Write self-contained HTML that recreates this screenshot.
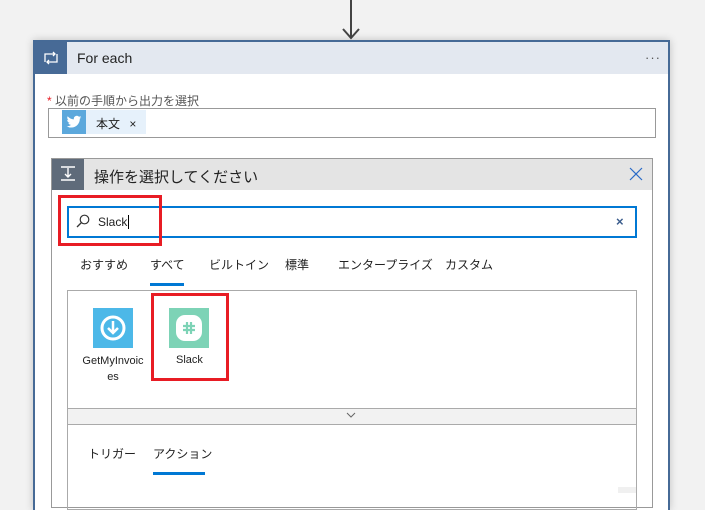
<!DOCTYPE html>
<html><head><meta charset="utf-8"><style>
*{margin:0;padding:0;box-sizing:border-box}
html,body{width:705px;height:493px}
body{background:#f2f2f2;position:relative;overflow:hidden;font-family:"Liberation Sans","Noto Sans CJK JP",sans-serif;color:#222}
.a{position:absolute}
.t{font-size:13px;white-space:nowrap}
.tab{font-size:12px;top:256px}
</style></head><body>
<div class="a" style="left:350px;top:0;width:2px;height:38px;background:#444"></div>
<svg class="a" style="left:342px;top:28px" width="18" height="12"><path d="M1 1 L9 10 L17 1" stroke="#444" stroke-width="2" fill="none"/></svg>
<div class="a" style="left:33px;top:40px;width:637px;height:470px;background:#fff;border:2px solid #466a96;border-bottom:none;box-shadow:0 0 8px rgba(0,0,0,.2)"></div>
<div class="a" style="left:35px;top:42px;width:633px;height:32px;background:#e3e8f0"></div>
<div class="a" style="left:35px;top:42px;width:32px;height:32px;background:#476a96"></div>
<svg class="a" style="left:43px;top:50px" width="16" height="16"><path d="M2 12V4h10M10 2l2 2-2 2M14 4v8H4M6 14l-2-2 2-2" stroke="#fff" stroke-width="1.3" fill="none"/></svg>
<div class="a t" style="left:77px;top:50px;font-size:14px">For each</div>
<div class="a t" style="left:645px;top:50px;color:#555;letter-spacing:1px">···</div>
<div class="a t" style="left:47px;top:92px;font-size:12px;color:#555"><span style="color:#e81c24">*</span> 以前の手順から出力を選択</div>
<div class="a" style="left:48px;top:108px;width:608px;height:30px;border:1px solid #999"></div>
<div class="a" style="left:62px;top:110px;width:84px;height:24px;background:#e6f1fb"></div>
<div class="a" style="left:62px;top:110px;width:24px;height:24px;background:#5ca8dc"></div>
<svg class="a" style="left:66px;top:114px" width="16" height="16" viewBox="0 0 24 24"><path fill="#fff" d="M23 5a9 9 0 0 1-2.6.7A4.5 4.5 0 0 0 22.4 3a9 9 0 0 1-2.9 1.1A4.5 4.5 0 0 0 11.8 8 12.8 12.8 0 0 1 2.5 3.3a4.5 4.5 0 0 0 1.4 6 4.5 4.5 0 0 1-2-.6 4.5 4.5 0 0 0 3.6 4.5 4.5 4.5 0 0 1-2 .1 4.5 4.5 0 0 0 4.2 3.1A9 9 0 0 1 1 18.3 12.8 12.8 0 0 0 7.9 20.3c8.3 0 12.8-6.9 12.8-12.8v-.6A9 9 0 0 0 23 5z"/></svg>
<div class="a t" style="left:96px;top:115px;font-size:12px">本文 <span style="margin-left:6px">×</span></div>
<div class="a" style="left:51px;top:158px;width:602px;height:350px;border:1px solid #999;background:#fff"></div>
<div class="a" style="left:52px;top:159px;width:600px;height:31px;background:#e4e4e4"></div>
<div class="a" style="left:52px;top:159px;width:32px;height:31px;background:#5f6b7a"></div>
<svg class="a" style="left:59px;top:165px" width="18" height="18"><path d="M2 2h14M9 3v9M6 9l3 3 3-3M2 15h14" stroke="#fff" stroke-width="1.4" fill="none"/></svg>
<div class="a t" style="left:94px;top:166px;font-size:15px">操作を選択してください</div>
<svg class="a" style="left:629px;top:167px" width="14" height="14"><path d="M1 1L13 13M13 1L1 13" stroke="#2a6bc8" stroke-width="1.2"/></svg>
<div class="a" style="left:67px;top:206px;width:570px;height:32px;border:2px solid #0078d4"></div>
<svg class="a" style="left:76px;top:214px" width="14" height="14"><circle cx="8.5" cy="5.5" r="4.3" stroke="#333" stroke-width="1.2" fill="none"/><path d="M5.5 8.5L1 13" stroke="#333" stroke-width="1.3"/></svg>
<div class="a t" style="left:98px;top:215px;font-size:12px">Slack<span style="border-left:1px solid #000;margin-left:1px"></span></div>
<div class="a t" style="left:616px;top:214px;font-size:13px;color:#3a5c8c;font-weight:bold">×</div>
<div class="a" style="left:58px;top:195px;width:104px;height:51px;border:3px solid #e81c24"></div>
<div class="a t tab" style="left:80px">おすすめ</div>
<div class="a t tab" style="left:150px">すべて</div>
<div class="a" style="left:150px;top:283px;width:34px;height:3px;background:#0078d4"></div>
<div class="a t tab" style="left:209px">ビルトイン</div>
<div class="a t tab" style="left:285px">標準</div>
<div class="a t tab" style="left:338px">エンタープライズ</div>
<div class="a t tab" style="left:445px">カスタム</div>
<div class="a" style="left:67px;top:290px;width:570px;height:220px;border:1px solid #aaa"></div>
<div class="a" style="left:68px;top:408px;width:568px;height:17px;background:#f2f2f2;border-top:1px solid #aaa;border-bottom:1px solid #aaa"></div>
<svg class="a" style="left:346px;top:412px" width="10" height="7"><path d="M1 1l4 4 4-4" stroke="#666" fill="none"/></svg>
<div class="a" style="left:93px;top:308px;width:40px;height:40px;background:#4cb8e8"></div>
<svg class="a" style="left:93px;top:308px" width="40" height="40"><circle cx="20" cy="20" r="11" stroke="#fff" stroke-width="3" fill="none"/><path d="M20 13v12M15 20l5 5 5-5" stroke="#fff" stroke-width="2.5" fill="none"/></svg>
<div class="a" style="left:80px;top:353px;width:66px;text-align:center;font-size:11px;line-height:16px;word-break:break-all">GetMyInvoices</div>
<div class="a" style="left:169px;top:308px;width:40px;height:40px;background:#7dd3b6"></div>
<div class="a" style="left:176px;top:315px;width:26px;height:26px;background:#fff;border-radius:9px"></div>
<svg class="a" style="left:181px;top:320px" width="16" height="16"><path d="M6 2v12M10 2v12M2 6h12M2 10h12" stroke="#7dd3b6" stroke-width="2.2"/></svg>
<div class="a t" style="left:176px;top:354px;font-size:11px">Slack</div>
<div class="a" style="left:151px;top:293px;width:78px;height:88px;border:3px solid #e81c24"></div>
<div class="a t" style="left:88px;top:445px;font-size:12px">トリガー</div>
<div class="a t" style="left:153px;top:445px;font-size:12px">アクション</div>
<div class="a" style="left:153px;top:472px;width:52px;height:3px;background:#0078d4"></div>
<div class="a" style="left:618px;top:487px;width:18px;height:6px;background:#f0f0f0"></div>
</body></html>
